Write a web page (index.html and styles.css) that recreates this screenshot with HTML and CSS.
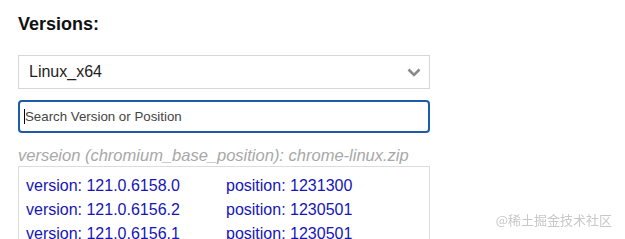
FILE: index.html
```html
<!DOCTYPE html>
<html lang="en">
<head>
<meta charset="UTF-8" />
<title>Chromium Versions</title>
<link rel="stylesheet" href="styles.css">
</head>
<body>

<div class="panel">
  <h2>Versions:</h2>

  <div class="select-box">
    <span>Linux_x64</span>
    <svg class="chevron" width="14" height="9" viewBox="0 0 14 9">
      <path d="M1.5 1.5 L7 7 L12.5 1.5" fill="none" stroke="#8a8a8a" stroke-width="2.6" />
    </svg>
  </div>

  <div class="search">
    <span class="caret"></span>
    <input type="text" placeholder="Search Version or Position" />
  </div>

  <div class="hint">verseion (chromium_base_position): chrome-linux.zip</div>

  <ul class="version-list">
    <li><span class="ver">version: 121.0.6158.0</span><span>position: 1231300</span></li>
    <li><span class="ver">version: 121.0.6156.2</span><span>position: 1230501</span></li>
    <li><span class="ver">version: 121.0.6156.1</span><span>position: 1230501</span></li>
  </ul>
</div>

<div class="watermark">@稀土掘金技术社区</div>

</body>
</html>
```

FILE: styles.css
```css
body {
  margin: 0;
  font-family: "Liberation Sans", Arial, sans-serif;
  background: #ffffff;
  color: #222;
  overflow: hidden;
}
.panel {
  width: 412px;
  padding: 0 18px;
}
h2 {
  font-size: 18px;
  font-weight: 700;
  margin: 0;
  padding-top: 14px;
  line-height: 20px;
  color: #111;
}
.select-box {
  margin-top: 21px;
  height: 32px;
  border: 1px solid #d6d6d6;
  display: flex;
  align-items: center;
  justify-content: space-between;
  padding: 0 8px 0 10px;
  font-size: 16px;
  color: #222;
}
.chevron {
  margin-top: 1px;
}
.search {
  position: relative;
  margin-top: 11px;
}
.search input {
  display: block;
  width: 100%;
  box-sizing: border-box;
  height: 33px;
  border: 2px solid #1d5aa8;
  border-radius: 4px;
  padding: 0 5px;
  font-family: "Liberation Sans", Arial, sans-serif;
  font-size: 13.3px;
  outline: none;
}
.search input::placeholder {
  color: #444;
}
.caret {
  position: absolute;
  left: 6px;
  top: 9px;
  width: 1px;
  height: 15px;
  background: #000;
}
.hint {
  margin-top: 12px;
  font-size: 16.5px;
  font-style: italic;
  color: #a8a8a8;
  line-height: 20px;
}
.version-list {
  list-style: none;
  margin: 1px 0 0;
  padding: 7px 7px;
  border: 1px solid #dcdcdc;
  font-size: 16px;
  color: #1515b8;
}
.version-list li {
  display: flex;
  line-height: 24px;
}
.ver {
  width: 200px;
}
.watermark {
  position: fixed;
  right: 13px;
  bottom: 10px;
  font-family: "Noto Sans CJK SC", sans-serif;
  font-size: 13px;
  color: #c8c8c8;
}
```
